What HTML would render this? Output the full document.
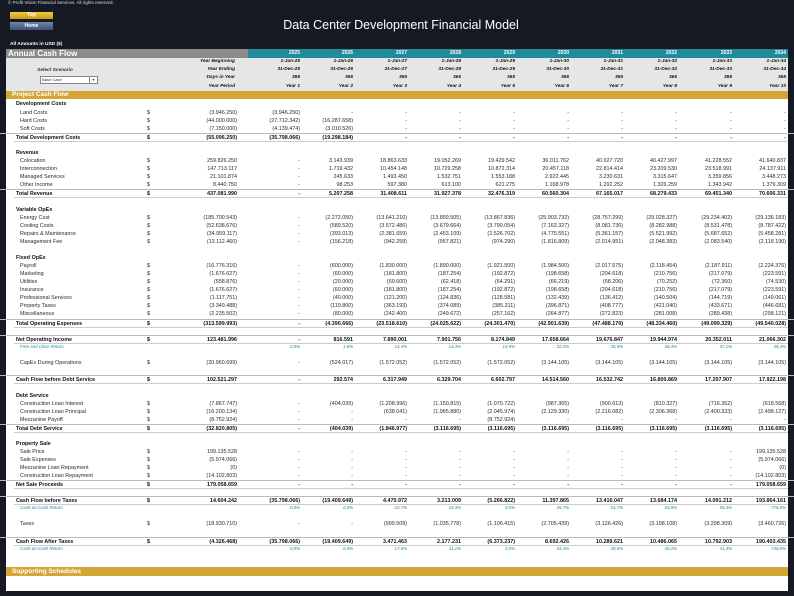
<!DOCTYPE html><html><head><meta charset="utf-8"><style>
body{margin:0;width:794px;height:596px;background:#151924;position:relative;overflow:hidden;font-family:"Liberation Sans",sans-serif;}
.a{position:absolute;white-space:nowrap}
#wrap{position:absolute;left:6px;top:49px;width:782px;height:542px;background:#fff}
.r{position:absolute;left:0;width:794px;height:8px;font-size:5.4px;line-height:8px;color:#2a2a2a}
.r span{position:absolute;top:0}
.b{font-weight:bold;color:#111}
.t{border-top:0.8px solid #bbb}
.p{color:#1d8a9b;font-style:italic;font-size:4.4px}
</style></head><body>
<div class="a" style="left:8px;top:0;font-size:4.5px;color:#ddd">© Profit Vision Financial Services. All rights reserved.</div>
<div class="a" style="left:10px;top:12px;width:43px;height:7px;background:linear-gradient(#f2cc40,#c79a10);font-size:5px;color:#fff;text-align:center;line-height:7px;font-weight:bold">Top</div>
<div class="a" style="left:10px;top:22px;width:43px;height:8px;background:linear-gradient(#7087a8,#3d5070);font-size:5px;color:#fff;text-align:center;line-height:8px;font-weight:bold">Home</div>
<div class="a" style="left:0;width:794px;top:18px;text-align:center;font-size:12.5px;color:#fff;padding-left:4px">Data Center Development Financial Model</div>
<div class="a" style="left:10px;top:42px;font-size:4.8px;color:#fff;font-weight:bold">All Amounts in  USD ($)</div>
<div id="wrap"></div>
<div class="a" style="left:6px;top:49px;width:242px;height:9px;background:#8b8b8b;color:#fff;font-weight:bold;font-size:8px;line-height:9px;padding-left:2px;box-sizing:border-box">Annual Cash Flow</div>
<div class="a" style="left:248px;top:49px;width:540px;height:9px;background:#218b9b"></div>
<div class="a" style="left:6px;top:58px;width:782px;height:33px;background:#e5e6e8"></div>
<div class="a" style="left:20px;top:68px;width:70px;text-align:center;font-size:4.8px;font-style:italic;font-weight:bold;color:#333">Select Scenario</div>
<div class="a" style="left:40px;top:76px;width:56px;height:6px;background:#fff;border:0.6px solid #888;font-size:4px;line-height:6px;color:#333">&nbsp;Base Case<span style="position:absolute;right:0;top:0;width:7px;height:6px;border-left:0.6px solid #888;text-align:center">▾</span></div>
<div class="a" style="left:6px;top:91px;width:782px;height:8px;background:#d5a535;color:#fff;font-weight:bold;font-size:6.5px;line-height:8px;padding-left:6px;box-sizing:border-box">Project Cash Flow</div>
<div class="a" style="left:6px;top:567px;width:782px;height:9px;background:#d5a535;color:#fff;font-weight:bold;font-size:6.5px;line-height:9px;padding-left:6px;box-sizing:border-box">Supporting Schedules</div>
<div id="g"></div>
<script>
var R=[300,353,407,461,515,569,623,677,732,786];
var g=document.getElementById('g'),h='';
function cell(x,t,c){return '<span style="right:'+(794-x)+'px'+(c?';'+c:'')+'">'+t+'</span>';}
var yrs=[2025,2026,2027,2028,2029,2030,2031,2032,2033,2034];
h+='<div class="r b" style="top:49px;color:#fff;font-size:5px;line-height:9px">';yrs.forEach(function(y,i){h+=cell(R[i],y)});h+='</div>';
var hl=[['Year Beginning',function(i){return '1-Jan-'+(25+i)}],['Year Ending',function(i){return '31-Dec-'+(25+i)}],['Days in Year',function(i){return [365,365,365,366,365,365,365,366,365,365][i]}],['Year Period',function(i){return 'Year '+(i+1)}]];
hl.forEach(function(a,k){h+='<div class="r b" style="top:'+(58+k*8.2)+'px;font-style:italic;font-size:4.8px">'+cell(235,a[0]);for(var i=0;i<10;i++)h+=cell(R[i],a[1](i));h+='</div>';});
var D=[
[104,'Development Costs','h'],
[113,'Land Costs','$','(3.946.250)','(3.946.250)','-','-','-','-','-','-','-','-','-'],
[121,'Hard Costs','$','(44.000.000)','(27.712.342)','(16.287.658)','-','-','-','-','-','-','-','-'],
[129,'Soft Costs','$','(7.150.000)','(4.139.474)','(3.010.526)','-','-','-','-','-','-','-','-'],
[137,'Total Development Costs','T','(55.096.250)','(35.798.066)','(19.298.184)','-','-','-','-','-','-','-','-'],
[153,'Revenue','h'],
[161,'Colocation','$','259.826.250','-','3.143.939','18.863.633','19.052.269','19.429.542','36.011.762','40.027.720','40.427.997','41.228.552','41.640.837'],
[169,'Interconnection','$','147.713.117','-','1.719.432','10.454.148','10.729.258','10.872.314','20.457.118','22.814.414','23.209.530','23.518.991','24.137.911'],
[177,'Managed Services','$','21.101.874','-','245.633','1.493.450','1.532.751','1.553.188','2.922.445','3.230.631','3.315.647','3.359.856','3.448.273'],
[185,'Other Income','$','8.440.750','-','98.253','597.380','613.100','621.275','1.168.978','1.292.252','1.326.259','1.343.942','1.379.309'],
[193,'Total Revenue','T','437.081.990','-','5.207.258','31.408.611','31.927.378','32.476.319','60.560.304','67.165.017','68.279.433','69.451.340','70.606.331'],
[210,'Variable OpEx','h'],
[218,'Energy Cost','$','(185.700.543)','-','(2.272.050)','(13.641.210)','(13.859.505)','(13.867.836)','(25.903.732)','(28.757.299)','(29.028.327)','(29.234.402)','(29.136.183)'],
[226,'Cooling Costs','$','(52.638.676)','-','(589.520)','(3.572.486)','(3.679.664)','(3.790.054)','(7.163.327)','(8.081.736)','(8.282.988)','(8.531.478)','(8.787.422)'],
[234,'Repairs & Maintenance','$','(34.959.117)','-','(393.013)','(2.381.659)','(2.453.109)','(2.526.702)','(4.775.551)','(5.361.157)','(5.521.992)','(5.687.652)','(5.458.281)'],
[242,'Management Fee','$','(13.112.460)','-','(156.218)','(942.258)','(957.821)','(974.290)','(1.816.809)','(2.014.951)','(2.048.383)','(2.083.540)','(2.118.190)'],
[258,'Fixed OpEx','h'],
[266,'Payroll','$','(16.776.316)','-','(600.000)','(1.830.000)','(1.890.000)','(1.921.500)','(1.984.500)','(2.017.575)','(2.118.454)','(2.187.911)','(2.224.376)'],
[274,'Marketing','$','(1.676.627)','-','(60.000)','(181.800)','(187.254)','(192.872)','(198.658)','(204.618)','(210.756)','(217.079)','(223.591)'],
[282,'Utilities','$','(558.876)','-','(20.000)','(60.600)','(62.418)','(64.291)','(66.219)','(68.206)','(70.252)','(72.360)','(74.530)'],
[290,'Insurance','$','(1.676.627)','-','(60.000)','(181.800)','(187.254)','(192.872)','(198.658)','(204.618)','(210.756)','(217.079)','(223.591)'],
[298,'Professional Services','$','(1.117.751)','-','(40.000)','(121.200)','(124.836)','(128.581)','(132.439)','(136.412)','(140.504)','(144.719)','(149.061)'],
[306,'Property Taxes','$','(3.349.488)','-','(119.800)','(363.193)','(374.089)','(385.311)','(396.871)','(408.777)','(421.040)','(433.671)','(446.681)'],
[314,'Miscellaneous','$','(2.235.502)','-','(80.000)','(242.400)','(249.672)','(257.162)','(264.877)','(272.823)','(281.008)','(289.438)','(298.121)'],
[323,'Total Operating Expenses','T','(313.599.993)','-','(4.390.666)','(23.518.610)','(24.025.622)','(24.301.470)','(42.901.639)','(47.488.170)','(48.334.460)','(49.099.329)','(49.540.028)'],
[339,'Net Operating Income','T','123.481.996','-','816.591','7.890.001','7.901.756','8.174.849','17.658.664','19.676.847','19.944.974','20.352.011','21.066.302'],
[347,'Free and Clear Return','p','','0,0%','1,6%','14,4%','14,4%','14,9%','32,2%','35,9%','36,4%','37,1%','38,4%'],
[363,'CapEx During Operations','$','(20.960.699)','-','(524.017)','(1.572.052)','(1.572.052)','(1.572.052)','(3.144.105)','(3.144.105)','(3.144.105)','(3.144.105)','(3.144.105)'],
[379,'Cash Flow before Debt Service','T','102.521.297','-','292.574','6.317.949','6.329.704','6.602.797','14.514.560','16.532.742','16.800.869','17.207.907','17.922.198'],
[396,'Debt Service','h'],
[404,'Construction Loan Interest','$','(7.867.747)','-','(404.039)','(1.208.996)','(1.150.815)','(1.070.722)','(987.365)','(900.613)','(810.327)','(716.362)','(618.568)'],
[412,'Construction Loan Principal','$','(16.200.134)','-','-','(638.041)','(1.965.880)','(2.045.974)','(2.129.330)','(2.216.082)','(2.306.368)','(2.400.333)','(2.498.127)'],
[420,'Mezzanine Payoff','$','(8.752.924)','-','-','-','-','(8.752.924)','-','-','-','-','-'],
[428,'Total Debt Service','T','(32.820.805)','-','(404.039)','(1.846.977)','(3.116.695)','(3.116.695)','(3.116.695)','(3.116.695)','(3.116.695)','(3.116.695)','(3.116.695)'],
[444,'Property Sale','h'],
[452,'Sale Price','$','199.135.528','-','-','-','-','-','-','-','-','-','199.135.528'],
[460,'Sale Expenses','$','(5.974.066)','-','-','-','-','-','-','-','-','-','(5.974.066)'],
[468,'Mezzanine Loan Repayment','$','(0)','-','-','-','-','-','-','-','-','-','(0)'],
[476,'Construction Loan Repayment','$','(14.102.803)','-','-','-','-','-','-','-','-','-','(14.102.803)'],
[484,'Net Sale Proceeds','T','179.058.659','-','-','-','-','-','-','-','-','-','179.058.659'],
[500,'Cash Flow before Taxes','T','14.604.242','(35.798.066)','(19.409.649)','4.470.972','3.213.009','(5.266.822)','11.397.865','13.416.047','13.684.174','14.091.212','193.864.161'],
[508,'Cash-on-Cash Return','p','','0,0%','0,0%','22,7%','16,3%','0,0%','45,7%','54,7%','54,8%','56,4%','776,0%'],
[524,'Taxes','$','(18.930.710)','-','-','(999.509)','(1.035.778)','(1.106.415)','(2.705.439)','(3.126.426)','(3.198.108)','(3.298.309)','(3.460.726)'],
[541,'Cash Flow After Taxes','T','(4.326.468)','(35.798.066)','(19.409.649)','3.471.463','2.177.231','(6.373.237)','8.692.426','10.289.621','10.486.065','10.792.903','190.403.435'],
[549,'Cash-on-Cash Return','p','','0,0%','0,0%','17,6%','11,1%','0,0%','34,4%','39,6%','40,2%','41,4%','730,0%']
];
D.forEach(function(d){
 var y=d[0]-4,ty=d[2],cls='r'+(ty=='h'||ty=='T'?' b':'')+(ty=='T'?' t':'')+(ty=='p'?' p':'');
 h+='<div class="'+cls+'" style="top:'+y+'px">';
 h+='<span style="left:'+(ty=='$'?20:ty=='p'?20:16)+'px">'+d[1]+'</span>';
 if(ty!='h'&&ty!='p')h+='<span style="left:147px">$</span>';
 if(d.length>3){h+=cell(237,d[3]);for(var i=0;i<10;i++)h+=cell(R[i],d[4+i]);}
 h+='</div>';
 if(ty=='T')h+='<div class="a" style="left:14px;width:774px;top:'+(y+8)+'px;border-top:0.6px solid #ccc"></div>';
});
g.innerHTML=h;
</script>
</body></html>
